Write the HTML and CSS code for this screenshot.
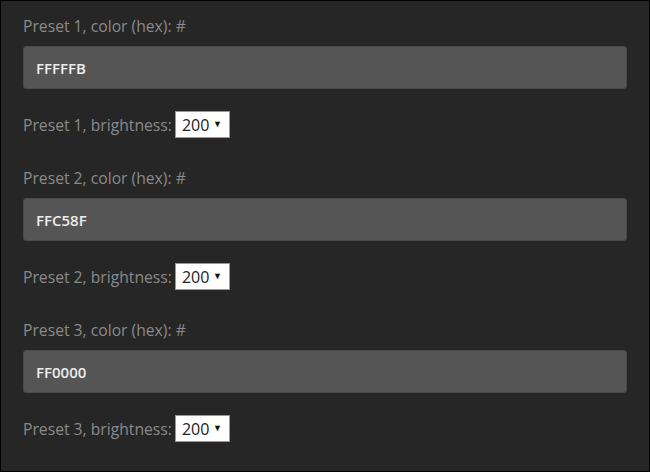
FILE: index.html
```html
<!DOCTYPE html>
<html lang="en">
<head>
    <meta charset="UTF-8">
    <title>Presets</title>
    <link rel="stylesheet" href="styles.css">
</head>
<body>
    <div class="panel">
        <!-- Preset 1 -->
        <div class="preset">
            <label class="field-label" for="color1">Preset 1, color (hex): #</label>
            <input class="hex-input" id="color1" type="text" value="FFFFFB">
            <div class="bright-row">
                <span class="field-label">Preset 1, brightness:</span>
                <span class="select-wrap">
                    <select class="bright-select"><option>200</option></select>
                </span>
            </div>
        </div>

        <!-- Preset 2 -->
        <div class="preset">
            <label class="field-label" for="color2">Preset 2, color (hex): #</label>
            <input class="hex-input" id="color2" type="text" value="FFC58F">
            <div class="bright-row">
                <span class="field-label">Preset 2, brightness:</span>
                <span class="select-wrap">
                    <select class="bright-select"><option>200</option></select>
                </span>
            </div>
        </div>

        <!-- Preset 3 -->
        <div class="preset">
            <label class="field-label" for="color3">Preset 3, color (hex): #</label>
            <input class="hex-input" id="color3" type="text" value="FF0000">
            <div class="bright-row">
                <span class="field-label">Preset 3, brightness:</span>
                <span class="select-wrap">
                    <select class="bright-select"><option>200</option></select>
                </span>
            </div>
        </div>
    </div>
</body>
</html>
```

FILE: styles.css
```css
html, body {
    margin: 0;
    padding: 0;
}

body {
    font-family: "Open Sans", Arial, sans-serif;
    background-color: #262626;
}

.panel {
    box-sizing: border-box;
    width: 650px;
    height: 472px;
    border: 1px solid #000;
    background-color: #262626;
    padding: 15px 22px 0 22px;
}

.preset {
    display: flex;
    flex-direction: column;
    align-items: flex-start;
    margin-bottom: 30px;
}

.field-label {
    display: block;
    font-size: 15.7px;
    line-height: 20px;
    color: #8a8a8a;
}

.hex-input {
    box-sizing: border-box;
    width: 604px;
    height: 43px;
    margin-top: 10px;
    padding: 0 12px;
    border: 1px solid #484848;
    border-radius: 3px;
    background-color: #555;
    color: #ececec;
    font-family: "Open Sans", Arial, sans-serif;
    font-size: 15px;
    font-weight: 600;
    outline: none;
}

.bright-row {
    display: flex;
    align-items: center;
    margin-top: 22px;
}

.bright-row .field-label {
    margin-right: 3px;
}

.select-wrap {
    position: relative;
    display: inline-block;
}

.select-wrap::after {
    content: "\25BC";
    position: absolute;
    right: 8px;
    top: 6px;
    font-size: 9px;
    color: #111;
    pointer-events: none;
}

.bright-select {
    appearance: none;
    -webkit-appearance: none;
    box-sizing: border-box;
    width: 55px;
    height: 27px;
    padding: 0 0 0 6px;
    border: 1px solid #999;
    border-radius: 0;
    background-color: #fff;
    color: #222;
    font-family: "Open Sans", Arial, sans-serif;
    font-size: 16px;
}
```
